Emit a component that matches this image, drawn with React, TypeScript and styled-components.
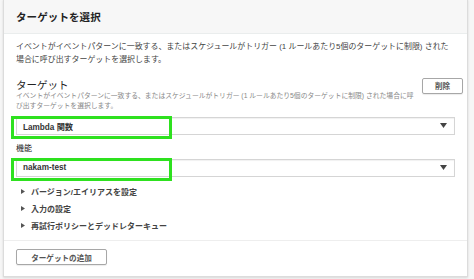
import styled, { createGlobalStyle } from "styled-components";

const GlobalStyle = createGlobalStyle`
  html, body {
    margin: 0;
    padding: 0;
    background: #f6f6f6;
    font-family: "Liberation Sans", "Noto Sans CJK JP", sans-serif;
    color: #333;
  }
`;

const Page = styled.div`
  width: 474px;
  height: 279px;
  padding-left: 3px;
  box-sizing: border-box;
  overflow: hidden;
`;

const Panel = styled.div`
  width: 465px;
  height: 278px;
  margin-top: -1px;
  box-sizing: border-box;
  background: #fff;
  border: 1px solid #dcdcdc;
  box-shadow: 0 1px 2px rgba(0, 0, 0, 0.12);
  position: relative;
  display: flex;
  flex-direction: column;
`;

const Header = styled.div`
  height: 35px;
  background: #f7f7f7;
  border-bottom: 1px solid #eaeded;
  display: flex;
  align-items: center;
  padding: 0 12px;
`;

const Title = styled.h2`
  margin: 0;
  font-size: 10.5px;
  font-weight: 700;
  color: #222;
  letter-spacing: 0.1px;
`;

const Body = styled.div`
  padding: 6px 12px 0;
  flex: 1;
`;

const Description = styled.p`
  margin: 0;
  font-size: 7.95px;
  line-height: 13px;
  color: #444;
  white-space: nowrap;
`;

const TargetRow = styled.div`
  display: flex;
  align-items: flex-start;
  margin-top: 13px;
  margin-right: -8px;
  gap: 2px;
`;

const TargetText = styled.div`
  flex: 1;
`;

const FieldLabel = styled.div<{ $size?: number }>`
  font-size: ${({ $size }) => $size ?? 8}px;
  line-height: 12px;
  color: #222;
`;

const Hint = styled.div`
  font-size: 6.8px;
  line-height: 10px;
  color: #888;
`;

const Button = styled.button<{ $width: number }>`
  width: ${({ $width }) => $width}px;
  height: 16px;
  padding: 0;
  background: #fff;
  border: 1px solid #a7a7a7;
  border-radius: 2px;
  font-family: inherit;
  font-size: 7.6px;
  font-weight: 700;
  color: #555;
  box-shadow: 0 1px 1px rgba(0, 0, 0, 0.08);
`;

const DeleteButton = styled(Button)`
  margin-top: -1px;
  flex-shrink: 0;
`;

const Select = styled.div<{ $top: number }>`
  margin-top: ${({ $top }) => $top}px;
  height: 18px;
  box-sizing: border-box;
  border: 1px solid #d5d5d5;
  box-shadow: inset 0 1px 1px rgba(0, 0, 0, 0.06);
  display: flex;
  align-items: center;
  justify-content: space-between;
  padding: 0 7px 0 6px;
  font-size: 8.2px;
  font-weight: 700;
  color: #333;
`;

const Spacer = styled.div`
  height: 8px;
`;

const Caret = () => (
  <svg width="7" height="5" viewBox="0 0 7 5">
    <path d="M0 0 H7 L3.5 5 Z" fill="#444" />
  </svg>
);

const Expanders = styled.div`
  margin-top: 6px;
  padding-left: 5px;
`;

const Expander = styled.div`
  display: flex;
  align-items: center;
  height: 17px;
  font-size: 8px;
  font-weight: 700;
  color: #444;
  gap: 6px;
`;

const Arrow = () => (
  <svg width="4" height="5" viewBox="0 0 4 5">
    <path d="M0 0 L4 2.5 L0 5 Z" fill="#555" />
  </svg>
);

const Footer = styled.div`
  border-top: 1px solid #eeeeee;
  padding: 6px 12px 11px;
  margin-top: 6px;
`;

const Highlight = styled.div<{ $top: number }>`
  position: absolute;
  left: 7px;
  top: ${({ $top }) => $top}px;
  width: 161px;
  height: 23px;
  box-sizing: border-box;
  border: 3px solid #2ee11f;
  pointer-events: none;
`;

export default function App() {
  return (
    <>
      <GlobalStyle />
      <Page>
        <Panel>
          <Header>
            <Title>ターゲットを選択</Title>
          </Header>
          <Body>
            <Description>
              イベントがイベントパターンに一致する、またはスケジュールがトリガー (1 ルールあたり5個のターゲットに制限) された
              <br />
              場合に呼び出すターゲットを選択します。
            </Description>
            <TargetRow>
              <TargetText>
                <FieldLabel $size={10.5}>ターゲット</FieldLabel>
                <Hint>
                  イベントがイベントパターンに一致する、またはスケジュールがトリガー (1 ルールあたり5個のターゲットに制限) された場合に呼び出すターゲットを選択します。
                </Hint>
              </TargetText>
              <DeleteButton $width={41}>削除</DeleteButton>
            </TargetRow>
            <Select $top={6}>
              <span>Lambda 関数</span>
              <Caret />
            </Select>
            <Spacer />
            <FieldLabel>機能</FieldLabel>
            <Select $top={4}>
              <span>nakam-test</span>
              <Caret />
            </Select>
            <Expanders>
              <Expander>
                <Arrow />
                バージョン/エイリアスを設定
              </Expander>
              <Expander>
                <Arrow />
                入力の設定
              </Expander>
              <Expander>
                <Arrow />
                再試行ポリシーとデッドレターキュー
              </Expander>
            </Expanders>
          </Body>
          <Footer>
            <Button $width={91}>ターゲットの追加</Button>
          </Footer>
          <Highlight $top={116} />
          <Highlight $top={158} />
        </Panel>
      </Page>
    </>
  );
}
